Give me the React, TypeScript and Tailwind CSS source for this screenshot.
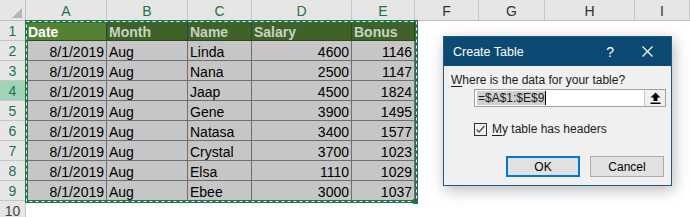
import React from "react";

const cols = [
  { label: "A", on: true },
  { label: "B", on: true },
  { label: "C", on: true },
  { label: "D", on: true },
  { label: "E", on: true },
  { label: "F", on: false },
  { label: "G", on: false },
  { label: "H", on: false },
  { label: "I", on: false },
];

const heads = ["Date", "Month", "Name", "Salary", "Bonus"];

const rows = [
  ["8/1/2019", "Aug", "Linda", "4600", "1146"],
  ["8/1/2019", "Aug", "Nana", "2500", "1147"],
  ["8/1/2019", "Aug", "Jaap", "4500", "1824"],
  ["8/1/2019", "Aug", "Gene", "3900", "1495"],
  ["8/1/2019", "Aug", "Natasa", "3400", "1577"],
  ["8/1/2019", "Aug", "Crystal", "3700", "1023"],
  ["8/1/2019", "Aug", "Elsa", "1110", "1029"],
  ["8/1/2019", "Aug", "Ebee", "3000", "1037"],
];

// columns 0, 3, 4 are right aligned (date + numbers)
const rightAligned = [true, false, false, true, true];

const RowHead = ({ n, active }: { n: number; active?: boolean }) => (
  <div
    className={`flex items-center justify-center border-r border-b border-[#c6c6c6] pt-[2px] text-[14px] ${
      active ? "bg-[#9fd5b7] text-[#1e6b41]" : "bg-[#e6e6e6]"
    } ${n < 10 ? "text-[#217346]" : "text-[#444444]"}`}
  >
    {n}
  </div>
);

const Blank = () => <div className="bg-white" />;

export default function App() {
  return (
    <div className="relative h-[217px] w-[690px] overflow-hidden bg-white font-['Liberation_Sans',Arial,sans-serif] text-[14px] text-black">
      {/* Sheet grid */}
      <div className="grid grid-cols-[26px_81px_81px_64px_100px_63px_64px_66px_90px_1fr] grid-rows-[21px_repeat(10,20px)]">
        {/* Corner */}
        <div className="relative border-r border-b border-[#bfbfbf] bg-[#e6e6e6]">
          <svg className="absolute left-0 top-0" width="25" height="20">
            <polygon points="12,18 22,18 22,8" fill="#b5b5b5" />
          </svg>
        </div>

        {/* Column headers */}
        {cols.map((c) => (
          <div
            key={c.label}
            className={`flex items-center justify-center border-r border-b border-r-[#c6c6c6] border-b-[#bfbfbf] bg-[#e6e6e6] pt-[2px] text-[14px] ${
              c.on ? "text-[#217346]" : "text-[#333333]"
            }`}
          >
            {c.label}
          </div>
        ))}

        {/* Row 1: table headers */}
        <RowHead n={1} />
        {heads.map((h, i) => (
          <div
            key={h}
            className={`flex items-center overflow-hidden whitespace-nowrap border-r border-b border-[#2f4a1f] pl-[2px] pt-[3px] font-bold ${
              i === 0 ? "bg-[#548235] text-white" : "bg-[#3f6228] text-[#c9d1c3]"
            }`}
          >
            {h}
          </div>
        ))}
        <Blank />
        <Blank />
        <Blank />
        <Blank />

        {/* Rows 2-9 */}
        {rows.map((r, ri) => (
          <React.Fragment key={ri}>
            <RowHead n={ri + 2} active={ri + 2 === 4} />
            {r.map((v, ci) => (
              <div
                key={ci}
                className={`flex items-center overflow-hidden whitespace-nowrap border-r border-b border-[#6e6e6e] bg-[#c6c6c6] px-[2px] pt-[3px] ${
                  rightAligned[ci] ? "justify-end" : "justify-start"
                }`}
              >
                {v}
              </div>
            ))}
            <Blank />
            <Blank />
            <Blank />
            <Blank />
          </React.Fragment>
        ))}

        {/* Row 10 */}
        <RowHead n={10} />
        <Blank />
        <Blank />
        <Blank />
        <Blank />
        <Blank />
        <Blank />
        <Blank />
        <Blank />
        <Blank />
      </div>

      {/* Copy marquee around A1:E9 */}
      <svg
        className="pointer-events-none absolute left-[25px] top-[20px]"
        width="394"
        height="185"
      >
        <rect x="1.5" y="1.5" width="390" height="180" fill="none" stroke="#217346" strokeWidth="3" />
        <rect
          x="1.5"
          y="1.5"
          width="390"
          height="180"
          fill="none"
          stroke="#ffffff"
          strokeWidth="1"
          strokeDasharray="3 3"
        />
        <rect x="388" y="179" width="5" height="5" fill="#217346" />
      </svg>

      {/* Create Table dialog */}
      <div className="absolute left-[443px] top-[36px] flex h-[150px] w-[229px] flex-col border border-[#1c5a86] bg-[#f0f0f0] shadow-[2px_4px_14px_rgba(0,0,0,0.28)]">
        <div className="flex h-[29px] items-center bg-[#0d4a73] pl-[9px] text-[12.5px] text-white">
          <span className="pt-[1px]">Create Table</span>
          <span className="ml-auto mr-[28px] pt-[1px] text-[14px]">?</span>
          <svg className="mr-[18px]" width="11" height="11" viewBox="0 0 11 11">
            <path d="M0.5 0.5 L10.5 10.5 M10.5 0.5 L0.5 10.5" stroke="#ffffff" strokeWidth="1.2" />
          </svg>
        </div>

        <div className="flex flex-col px-[7px] pt-[7px] text-[12px] text-[#1a1a1a]">
          <div className="leading-[15px]">
            <span className="underline underline-offset-2">W</span>here is the data for your table?
          </div>

          <div className="ml-[23px] mt-[1px] flex h-[18px] w-[192px] border border-[#a0a0a0] bg-white">
            <div className="flex flex-1 items-center pl-[2px]">
              <span className="bg-[#cfcfcf] px-[1px] text-[12px] leading-[14px]">=$A$1:$E$9</span>
              <span className="h-[14px] w-[1px] bg-black" />
            </div>
            <div className="flex w-[21px] items-center justify-center border-l border-[#c8c8c8] bg-[#f0f0f0]">
              <svg width="11" height="12" viewBox="0 0 11 12">
                <path d="M5.5 0.5 L10.5 5.5 L7.5 5.5 L7.5 9 L3.5 9 L3.5 5.5 L0.5 5.5 Z" fill="#000000" />
                <rect x="0.5" y="10.5" width="10" height="1.5" fill="#000000" />
              </svg>
            </div>
          </div>

          <div className="ml-[23px] mt-[15px] flex items-center">
            <div className="flex h-[13px] w-[13px] items-center justify-center border border-[#333333] bg-[#f0f0f0]">
              <svg width="11" height="11" viewBox="0 0 11 11">
                <path d="M1.5 5.5 L4 8 L9.5 2" fill="none" stroke="#555555" strokeWidth="1.4" />
              </svg>
            </div>
            <span className="ml-[5px] leading-[14px]">
              <span className="underline underline-offset-2">M</span>y table has headers
            </span>
          </div>

          <div className="mt-[20px] flex justify-end gap-[10px] pr-[-0px]">
            <button className="h-[21px] w-[74px] border-2 border-[#0078d7] bg-[#e1e1e1] text-[12px] text-black">
              OK
            </button>
            <button className="h-[21px] w-[74px] border border-[#adadad] bg-[#e1e1e1] text-[12px] text-black">
              Cancel
            </button>
          </div>
        </div>
      </div>
    </div>
  );
}
